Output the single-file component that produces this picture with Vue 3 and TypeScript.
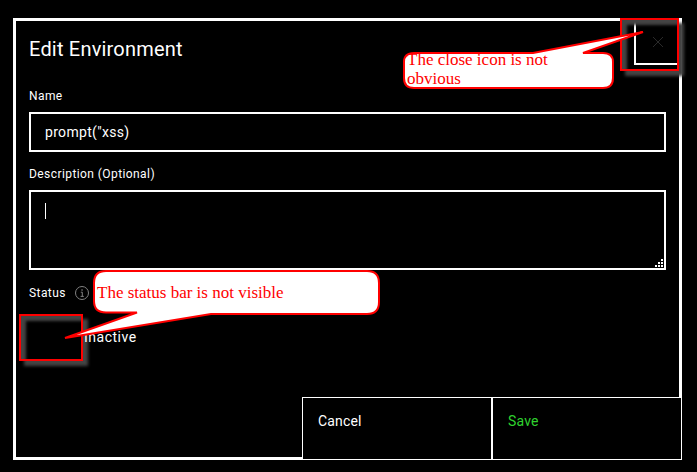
<script setup lang="ts">
const nameValue = 'prompt("xss)'
const resizeDots: [number, number][] = [[6, 0], [3, 3], [6, 3], [0, 6], [3, 6], [6, 6]]
</script>

<template>
  <div class="page">
    <section class="modal">
      <header class="head">
        <h1 class="title">Edit Environment</h1>
        <button class="close" aria-label="Close">
          <svg width="12" height="12" viewBox="0 0 12 12"><path d="M1 1 L11 11 M11 1 L1 11" stroke="#2a2a2a" stroke-width="1" fill="none" /></svg>
        </button>
      </header>

      <label class="label name-label">Name</label>
      <input class="field" :value="nameValue" readonly />

      <label class="label desc-label">Description (Optional)</label>
      <div class="area">
        <span class="caret"></span>
        <svg class="grip" width="8" height="8" viewBox="0 0 8 8">
          <rect v-for="(d, i) in resizeDots" :key="i" :x="d[0]" :y="d[1]" width="2" height="2" fill="#fff" />
        </svg>
      </div>

      <div class="status-row">
        <span class="label">Status</span>
        <svg class="info" width="16" height="16" viewBox="0 0 16 16">
          <circle cx="8" cy="8" r="6.5" fill="none" stroke="#808080" stroke-width="1" />
          <path d="M6.8 7.2 H8.3 V11.4 M6.6 11.4 H9.8" fill="none" stroke="#808080" stroke-width="1" />
          <rect x="7.4" y="4.3" width="1.3" height="1.4" fill="#808080" />
        </svg>
      </div>
      <div class="toggle-row">Inactive</div>

      <footer class="foot">
        <button class="btn">Cancel</button>
        <button class="btn save">Save</button>
      </footer>
    </section>

    <div class="mark mark-close"></div>
    <div class="mark mark-status"></div>

    <svg class="notes" width="697" height="472" viewBox="0 0 697 472">
      <path d="M414 53 H533 L643 32 L583 53 H603 Q613 53 613 62 V78 Q613 88 603 88 H414 Q404 88 404 78 V62 Q404 53 414 53 Z" fill="#fff" stroke="#f00" stroke-width="2" />
      <text x="407" y="65" class="note">The close icon is not</text>
      <text x="407" y="84" class="note">obvious</text>
      <path d="M106 271 H367 Q379 271 379 283 V302 Q379 314 367 314 H211 L65 338 L137 312.500 H106 Q94 312.500 94 301 V283 Q94 271 106 271 Z" fill="#fff" stroke="#f00" stroke-width="2" />
      <text x="97" y="298" class="note">The status bar is not visible</text>
    </svg>
  </div>
</template>

<style scoped>
.page {
  position: relative;
  width: 697px;
  height: 472px;
  padding: 18px 0 0 13px;
  box-sizing: border-box;
  background: #000;
  overflow: hidden;
  font-family: Roboto, "Liberation Sans", sans-serif;
  color: #fff;
}
.modal {
  position: relative;
  display: flex;
  flex-direction: column;
  box-sizing: border-box;
  width: 669px;
  height: 442px;
  border: 3px solid #fff;
  padding: 0 13px;
  background: #000;
}
.head {
  display: flex;
  height: 44px;
  align-items: flex-start;
  justify-content: space-between;
}
.title {
  margin: 17px 0 0;
  font-size: 20px;
  line-height: 22px;
  font-weight: 400;
  letter-spacing: 0.2px;
}
.close {
  position: absolute;
  top: 0;
  right: 0;
  width: 45px;
  height: 44px;
  box-sizing: border-box;
  padding: 0;
  border: 0;
  border-left: 2px solid #fff;
  border-bottom: 2px solid #fff;
  background: #000;
  display: flex;
  align-items: center;
  justify-content: center;
}
.label {
  font-size: 12px;
  line-height: 14px;
  font-weight: 400;
  letter-spacing: 0.42px;
}
.name-label {
  margin-top: 24px;
}
.field {
  display: block;
  box-sizing: border-box;
  width: 637px;
  height: 40px;
  margin-top: 9px;
  padding: 0 14px;
  border: 2px solid #fff;
  background: #000;
  color: #fff;
  font: 400 14px Roboto, "Liberation Sans", sans-serif;
  letter-spacing: 0.32px;
  outline: none;
}
.desc-label {
  margin-top: 15px;
}
.area {
  position: relative;
  box-sizing: border-box;
  width: 637px;
  height: 80px;
  margin-top: 9px;
  border: 2px solid #fff;
}
.caret {
  position: absolute;
  left: 14px;
  top: 11px;
  width: 1px;
  height: 16px;
  background: #fff;
}
.grip {
  position: absolute;
  right: 1px;
  bottom: 1px;
}
.status-row {
  display: flex;
  align-items: center;
  gap: 8px;
  height: 16px;
  margin-top: 15px;
}
.toggle-row {
  position: relative;
  z-index: 1;
  margin: 28px 0 0 55px;
  font-size: 14px;
  line-height: 16px;
  letter-spacing: 0.5px;
}
.foot {
  display: flex;
  align-self: flex-end;
  margin: auto -16px -3px 0;
  background: #000;
}
.btn {
  box-sizing: border-box;
  width: 190px;
  height: 63px;
  padding: 0 0 16px 15px;
  border: 1px solid #fff;
  background: #000;
  color: #fff;
  text-align: left;
  font: 400 14px Roboto, "Liberation Sans", sans-serif;
  letter-spacing: 0.16px;
}
.save {
  color: #2fd22f;
}
.mark {
  position: absolute;
  box-sizing: border-box;
  border: 2px solid #f00;
  box-shadow: 5px 5px 3px #444, inset 5px 5px 3px #444;
}
.mark-close {
  left: 620px;
  top: 18px;
  width: 59px;
  height: 53px;
}
.mark-status {
  left: 19px;
  top: 314px;
  width: 64px;
  height: 47px;
}
.notes {
  position: absolute;
  z-index: 2;
  left: 0;
  top: 0;
}
.note {
  font-family: "Liberation Serif", serif;
  font-size: 17px;
  fill: #f00;
}
</style>

<style>
html, body {
  margin: 0;
  background: #000;
}
</style>
